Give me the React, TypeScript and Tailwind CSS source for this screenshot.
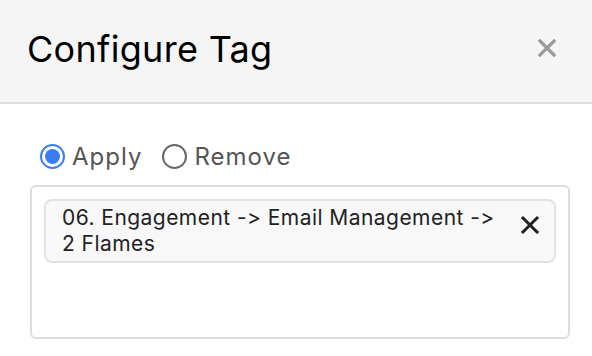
import React from "react";

export default function App() {
  return (
    <div className="w-[592px] h-[356px] bg-white overflow-hidden [font-feature-settings:'calt'_0,'liga'_0]" style={{ fontFamily: "Inter, 'Noto Sans', sans-serif" }}>
      <div className="h-[104px] bg-[#f5f5f5] border-b-2 border-[#dddddd] flex items-center justify-between pl-[27px] pr-[34px]">
        <h1 className="text-[36px] text-black leading-none tracking-[0.3px] -mt-[4px]">Configure Tag</h1>
        <svg width="22" height="22" viewBox="0 0 22 22" className="-mt-[6px]">
          <path d="M4 4 L18 18 M18 4 L4 18" stroke="#9a9a9a" strokeWidth="3.2" strokeLinecap="square" />
        </svg>
      </div>
      <div className="pl-[30px] pr-[22px] pt-[40px]">
        <div className="flex items-center gap-[20px] pl-[10px] text-[24px] text-[#555555] leading-none tracking-[1px]">
          <label className="flex items-center gap-[7px]">
            <span className="w-[25px] h-[25px] rounded-full border-2 border-[#3b7cf5] flex items-center justify-center">
              <span className="w-[15px] h-[15px] rounded-full bg-[#3b7cf5]" />
            </span>
            <span>Apply</span>
          </label>
          <label className="flex items-center gap-[7px]">
            <span className="w-[25px] h-[25px] rounded-full border-2 border-[#666666]" />
            <span>Remove</span>
          </label>
        </div>
        <div className="mt-[16px] h-[154px] border-2 border-[#dddddd] rounded-[6px] p-[12px]">
          <div className="bg-[#f8f8f9] border-2 border-[#e2e2e4] rounded-[8px] pl-[16px] pr-[14px] py-[4px] flex justify-between items-start">
            <span className="text-[21px] leading-[26px] text-[#222222] tracking-[0.45px]">
              06. Engagement -&gt; Email Management -&gt;
              <br />2 Flames
            </span>
            <svg width="20" height="20" viewBox="0 0 20 20" className="mt-[10px]">
              <path d="M3 3 L17 17 M17 3 L3 17" stroke="#1f1f22" strokeWidth="3" strokeLinecap="square" />
            </svg>
          </div>
        </div>
      </div>
    </div>
  );
}
